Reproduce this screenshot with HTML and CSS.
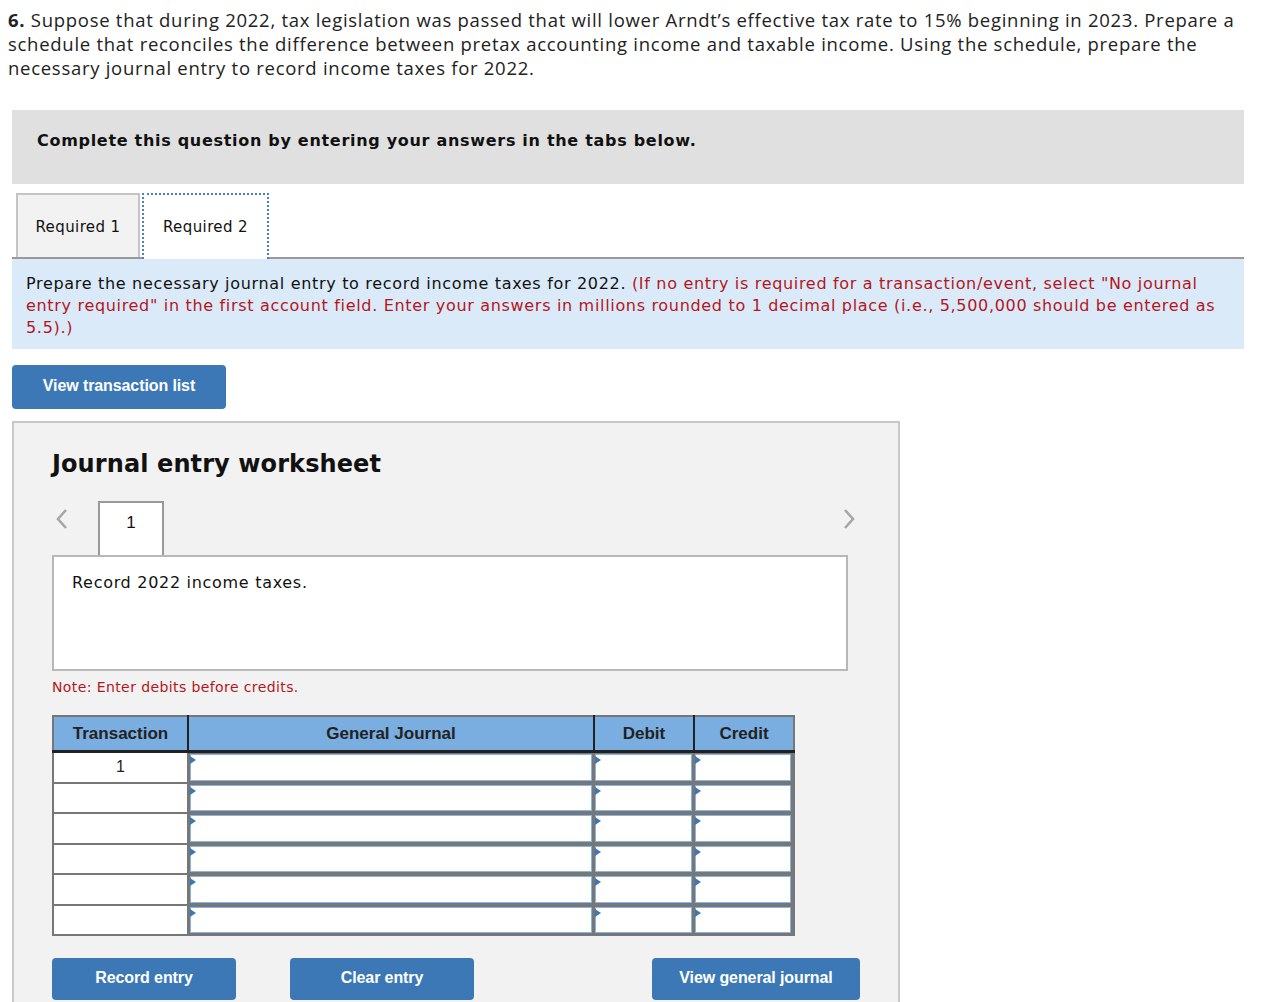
FILE: index.html
```html
<!DOCTYPE html>
<html lang="en">
<head>
    <meta charset="UTF-8">
    <title>Journal entry worksheet</title>
    <link rel="stylesheet" href="styles.css">
</head>
<body>
    <p class="question"><strong>6.</strong> Suppose that during 2022, tax legislation was passed that will lower Arndt’s effective tax rate to 15% beginning in 2023. Prepare a schedule that reconciles the difference between pretax accounting income and taxable income. Using the schedule, prepare the necessary journal entry to record income taxes for 2022.</p>

    <div class="banner">Complete this question by entering your answers in the tabs below.</div>

    <div class="tabs">
        <div class="tab">Required 1</div>
        <div class="tab active">Required 2</div>
    </div>

    <div class="info">
        Prepare the necessary journal entry to record income taxes for 2022. <span class="warn">(If no entry is required for a transaction/event, select "No journal entry required" in the first account field. Enter your answers in millions rounded to 1 decimal place (i.e., 5,500,000 should be entered as 5.5).)</span>
    </div>

    <a href="#" class="btn btn-list">View transaction list</a>

    <div class="worksheet">
        <h2>Journal entry worksheet</h2>

        <div class="pager">
            <span class="arrow">
                <svg width="14" height="22" viewBox="0 0 14 22"><path d="M11 2 L3 11 L11 20" fill="none" stroke="#a6a6a6" stroke-width="2.6"/></svg>
            </span>
            <div class="page-tab">1</div>
            <span class="arrow arrow-right">
                <svg width="14" height="22" viewBox="0 0 14 22"><path d="M3 2 L11 11 L3 20" fill="none" stroke="#a6a6a6" stroke-width="2.6"/></svg>
            </span>
        </div>
        <div class="desc">Record 2022 income taxes.</div>

        <p class="note">Note: Enter debits before credits.</p>

        <table class="journal">
            <thead>
                <tr>
                    <th class="c-trans">Transaction</th>
                    <th class="c-acct">General Journal</th>
                    <th class="c-num">Debit</th>
                    <th class="c-num">Credit</th>
                </tr>
            </thead>
            <tbody>
                <tr><td class="trans">1</td><td class="cell"><div class="field"></div></td><td class="cell"><div class="field"></div></td><td class="cell"><div class="field"></div></td></tr>
                <tr><td class="trans"></td><td class="cell"><div class="field"></div></td><td class="cell"><div class="field"></div></td><td class="cell"><div class="field"></div></td></tr>
                <tr><td class="trans"></td><td class="cell"><div class="field"></div></td><td class="cell"><div class="field"></div></td><td class="cell"><div class="field"></div></td></tr>
                <tr><td class="trans"></td><td class="cell"><div class="field"></div></td><td class="cell"><div class="field"></div></td><td class="cell"><div class="field"></div></td></tr>
                <tr><td class="trans"></td><td class="cell"><div class="field"></div></td><td class="cell"><div class="field"></div></td><td class="cell"><div class="field"></div></td></tr>
                <tr><td class="trans"></td><td class="cell"><div class="field"></div></td><td class="cell"><div class="field"></div></td><td class="cell"><div class="field"></div></td></tr>
            </tbody>
        </table>

        <div class="actions">
            <a href="#" class="btn btn-record">Record entry</a>
            <a href="#" class="btn btn-clear">Clear entry</a>
            <a href="#" class="btn btn-view">View general journal</a>
        </div>
    </div>
</body>
</html>
```

FILE: styles.css
```css
body {
    margin: 0;
    padding: 0 12px 0 8px;
    width: 1236px;
    background-color: #fff;
    color: #222;
    font-family: "Open Sans", "Liberation Sans", sans-serif;
}
.question {
    margin: 8px 0 0 0;
    font-size: 18.5px;
    letter-spacing: 0.72px;
    line-height: 24px;
    color: #222;
}
.question strong {
    font-weight: 700;
}
.banner {
    margin: 30px 0 0 4px;
    height: 74px;
    box-sizing: border-box;
    padding: 20px 25px 0;
    background-color: #e0e0e0;
    font-family: "DejaVu Sans", Verdana, sans-serif;
    font-weight: bold;
    font-size: 16px;
    letter-spacing: 0.7px;
    color: #111;
    line-height: 22px;
}
.tabs {
    display: flex;
    margin: 9px 0 0 4px;
    padding-left: 4px;
    border-bottom: 2px solid #999;
    height: 64px;
    gap: 2px;
}
.tab {
    width: 124px;
    box-sizing: border-box;
    height: 64px;
    border: 2px solid #c4c4c4;
    border-bottom: none;
    background-color: #f2f2f2;
    font-family: "DejaVu Sans", Verdana, sans-serif;
    font-size: 15px;
    letter-spacing: 0.4px;
    color: #111;
    padding-top: 23px;
    text-align: center;
}
.tab.active {
    width: 127px;
    height: 66px;
    background-color: #fff;
    border: 2px dotted #4a7fc6;
    border-bottom: none;
    margin-bottom: -2px;
}
.info {
    margin-left: 4px;
    padding: 14px 14px 10px;
    background-color: #dbeaf8;
    font-family: "DejaVu Sans", Verdana, sans-serif;
    font-size: 16px;
    letter-spacing: 0.68px;
    line-height: 22px;
    color: #111;
}
.warn {
    color: #b3161d;
}
.btn {
    display: inline-block;
    box-sizing: border-box;
    background-color: #3c78b6;
    color: #fff;
    border-radius: 4px;
    text-decoration: none;
    font-family: "Liberation Sans", Arial, sans-serif;
    font-weight: bold;
    font-size: 16px;
    letter-spacing: -0.1px;
    text-align: center;
}
.btn-list {
    margin: 16px 0 0 4px;
    width: 214px;
    height: 44px;
    line-height: 42px;
}
.worksheet {
    margin: 12px 0 0 4px;
    width: 888px;
    box-sizing: border-box;
    background-color: #f2f2f2;
    border: 2px solid #c8c8c8;
    border-bottom: none;
    padding: 26px 38px 0;
    height: 590px;
}
.worksheet h2 {
    margin: 0;
    font-family: "DejaVu Sans", Verdana, sans-serif;
    font-size: 24px;
    letter-spacing: 0.1px;
    line-height: 30px;
    color: #111;
}
.pager {
    display: flex;
    align-items: flex-start;
    margin-top: 22px;
    width: 808px;
    height: 54px;
}
.arrow {
    width: 43px;
    padding: 7px 0 0 3px;
}
.arrow-right {
    margin-left: auto;
    width: auto;
    padding: 7px 4px 0 0;
}
.page-tab {
    width: 66px;
    height: 54px;
    box-sizing: border-box;
    background-color: #fff;
    border: 2px solid #999;
    border-bottom: none;
    text-align: center;
    padding-top: 10px;
    font-family: "Liberation Sans", Arial, sans-serif;
    font-size: 17px;
    color: #111;
}
.desc {
    width: 796px;
    height: 116px;
    box-sizing: border-box;
    background-color: #fff;
    border: 2px solid #b8b8b8;
    padding: 16px 18px;
    font-family: "DejaVu Sans", Verdana, sans-serif;
    font-size: 16px;
    letter-spacing: 0.7px;
    color: #111;
}
.note {
    margin: 8px 0 0 0;
    font-family: "DejaVu Sans", Verdana, sans-serif;
    font-size: 14px;
    letter-spacing: 0.4px;
    color: #b3161d;
}
.journal {
    margin-top: 20px;
    border-collapse: collapse;
    border: 2px solid #777;
    background-color: #777;
    font-family: "Liberation Sans", Arial, sans-serif;
}
.journal th {
    background-color: #7aade0;
    height: 33px;
    padding: 0;
    font-size: 17px;
    font-weight: bold;
    color: #222;
    border-left: 2px solid #222;
    border-bottom: 3px solid #222;
}
.journal th:first-child {
    border-left: none;
}
.c-trans { width: 133px; }
.c-acct { width: 404px; }
.c-num { width: 98px; }
.journal td {
    padding: 0;
    border-top: 2px solid #777;
}
.journal tbody tr:first-child td {
    border-top: none;
}
.journal td.trans {
    background-color: #fff;
    border-right: 2px solid #777;
    text-align: center;
    font-size: 16px;
    color: #222;
}
.journal td.cell {
    background-color: #777;
    padding: 1px 2px 1px 1px;
}
.field {
    position: relative;
    height: 24.5px;
    background-color: #fff;
    border: 1px solid #86b4e3;
}
.field::before {
    content: "";
    position: absolute;
    left: -1px;
    top: 1px;
    border-left: 6px solid #3c78b6;
    border-top: 4px solid transparent;
    border-bottom: 4px solid transparent;
}
.actions {
    display: flex;
    margin-top: 22px;
    height: 40px;
}
.actions .btn {
    height: 42px;
    line-height: 40px;
}
.btn-record {
    width: 184px;
}
.btn-clear {
    width: 184px;
    margin-left: 54px;
}
.btn-view {
    width: 208px;
    margin-left: 178px;
}
```
